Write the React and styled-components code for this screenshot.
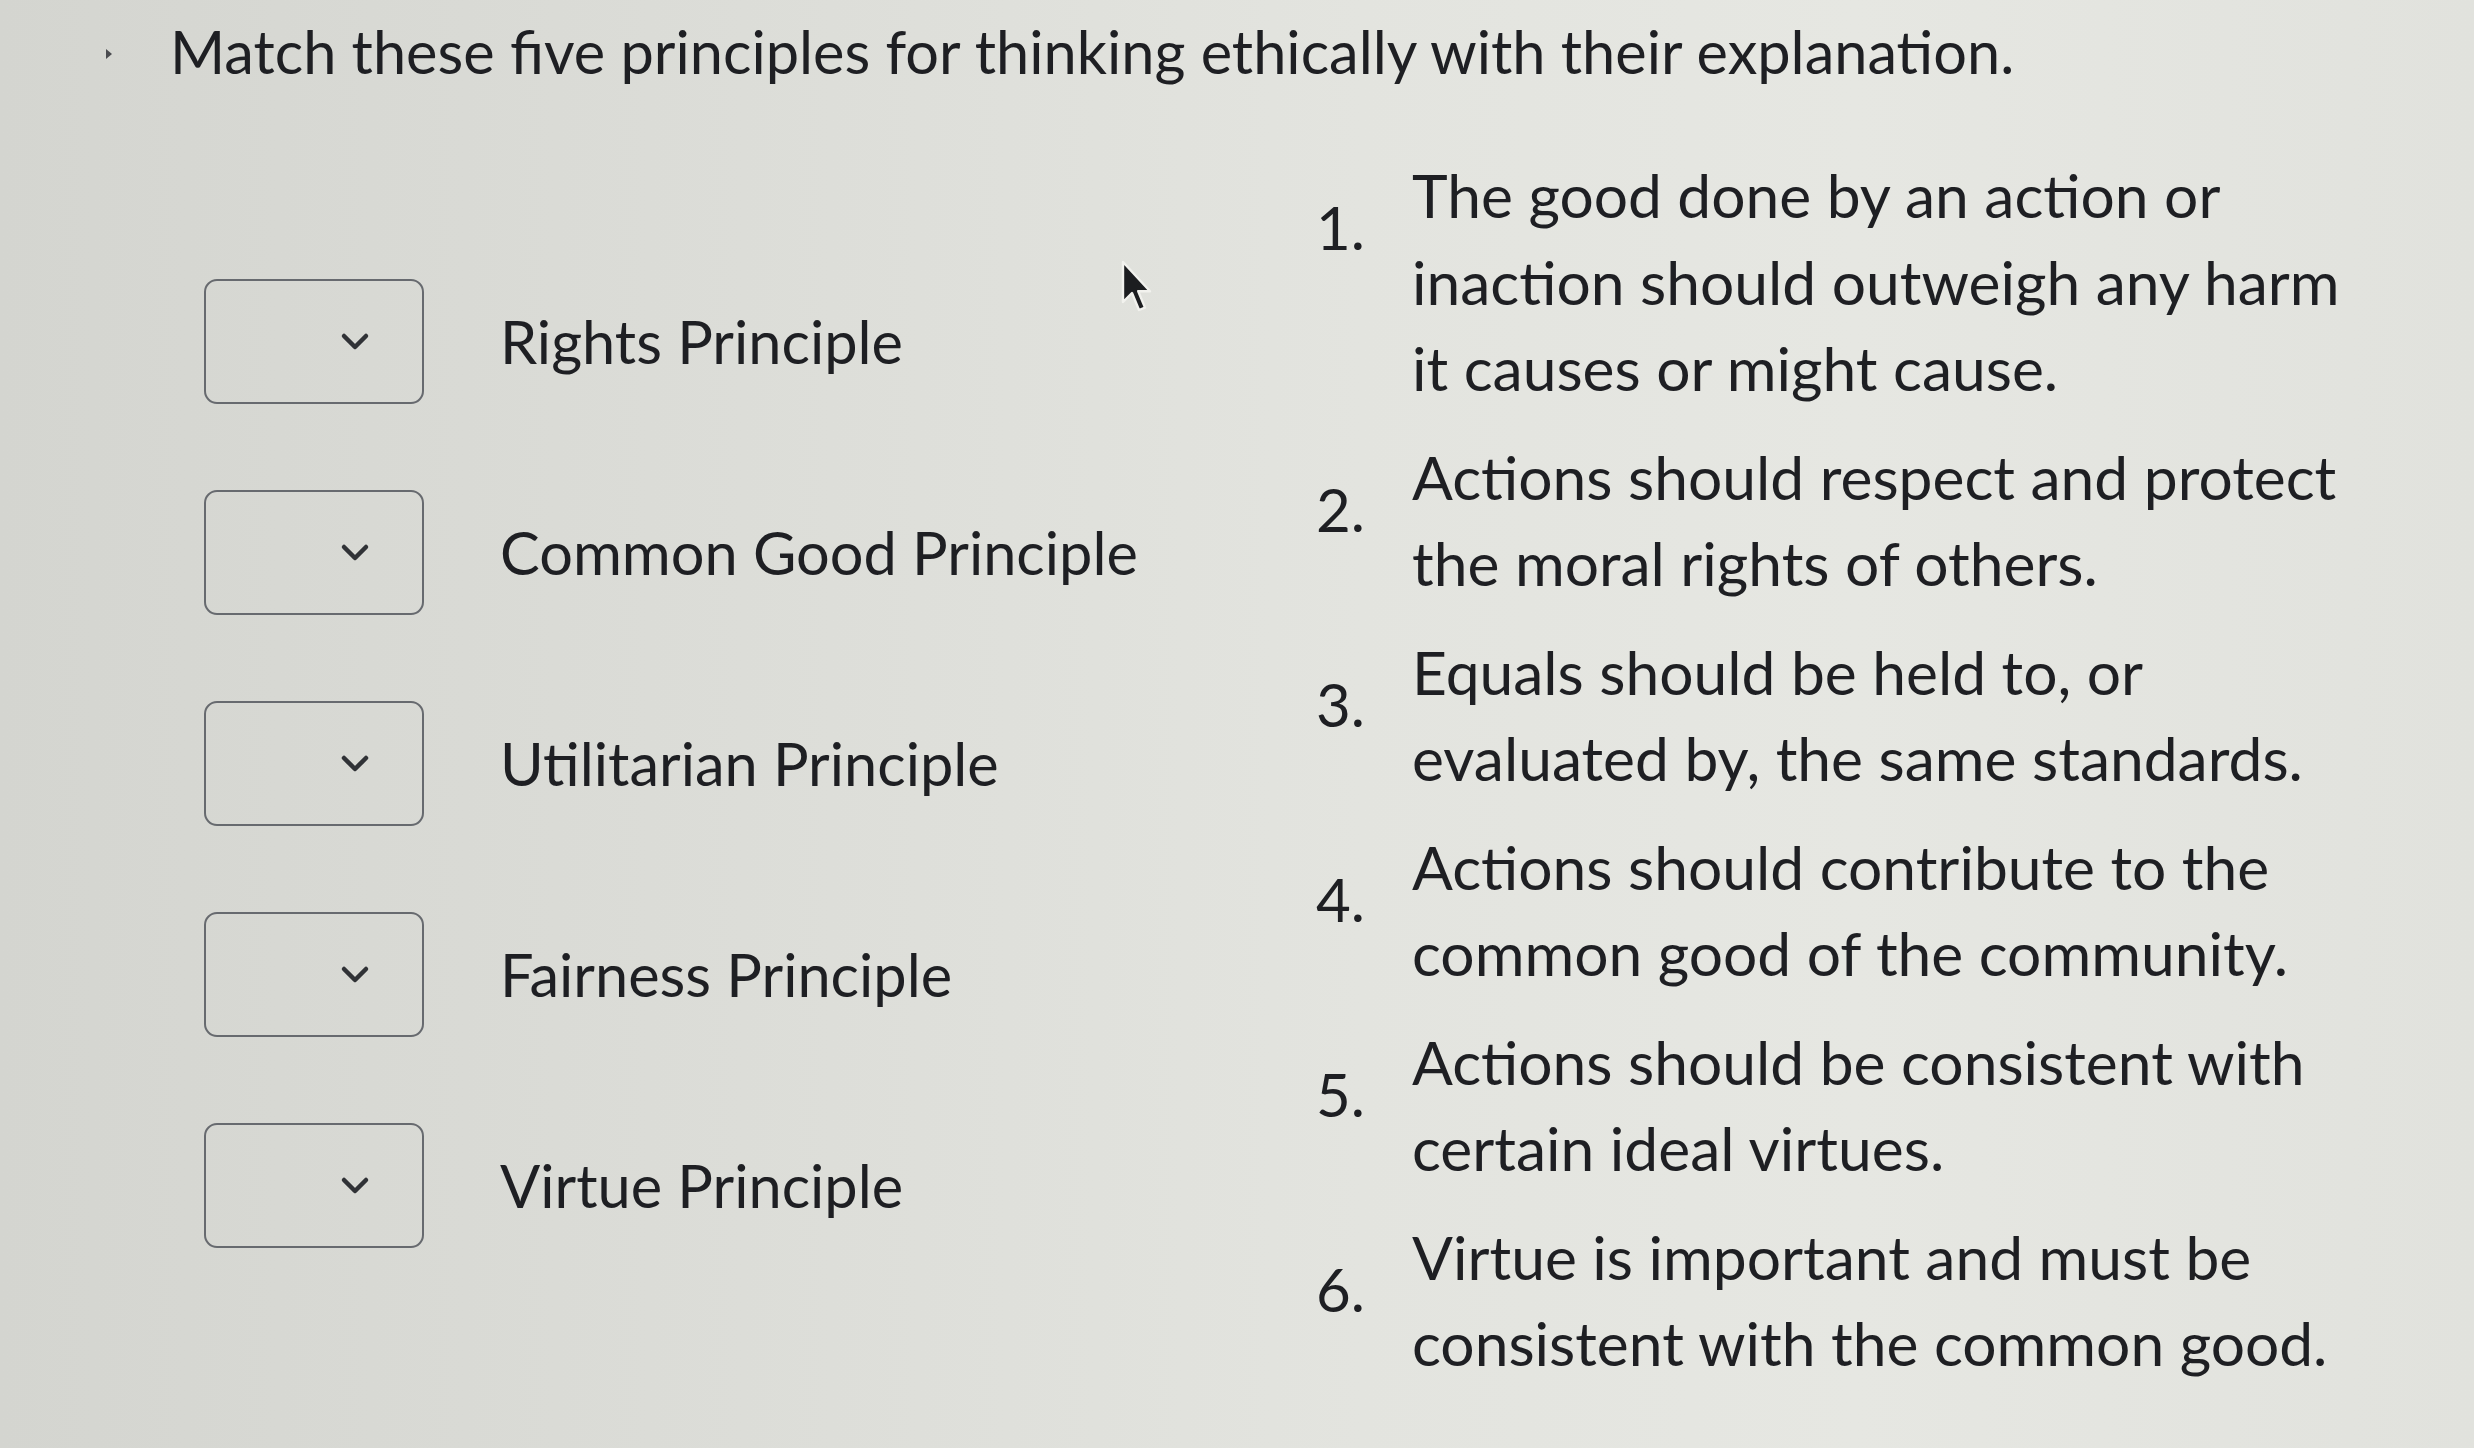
import React from 'react';
import styled, { createGlobalStyle } from 'styled-components';

const GlobalStyle = createGlobalStyle`
  html, body {
    margin: 0;
    padding: 0;
  }
  body {
    width: 2474px;
    height: 1448px;
    overflow: hidden;
    font-family: Lato, "Open Sans", "Liberation Sans", sans-serif;
    color: #1e1f23;
    background: linear-gradient(90deg, #d4d5d0 0%, #dcddd8 30%, #e3e4df 55%, #e6e7e2 75%, #e1e2dd 100%);
  }
`;

const Page = styled.div`
  position: relative;
  width: 2474px;
  height: 1448px;
  box-sizing: border-box;
  padding-top: 14px;
`;

const Heading = styled.div`
  display: flex;
  align-items: center;
  height: 74px;
  padding-left: 106px;
`;

const Bullet = styled.span`
  width: 0;
  height: 0;
  border-top: 5px solid transparent;
  border-bottom: 5px solid transparent;
  border-left: 6px solid #4a4b4f;
  margin-right: 58px;
  margin-top: 6px;
`;

const Title = styled.h1`
  margin: 0;
  font-size: 59.5px;
  font-weight: 400;
  line-height: 74px;
  white-space: nowrap;
`;

const Body = styled.div`
  display: flex;
  align-items: flex-start;
  margin-top: 64px;
  padding-left: 204px;
`;

const Choices = styled.div`
  width: 1112px;
  display: flex;
  flex-direction: column;
  padding-top: 84px;
`;

const ChoiceRow = styled.div`
  display: flex;
  align-items: center;
  height: 211px;
`;

const Select = styled.div`
  width: 220px;
  height: 125px;
  box-sizing: border-box;
  border: 2.5px solid #676a6f;
  border-radius: 13px;
  display: flex;
  align-items: center;
  justify-content: flex-end;
  padding-right: 52px;
  flex-shrink: 0;
`;

const Label = styled.span`
  margin-left: 76px;
  font-size: 59.5px;
  line-height: 1;
  white-space: nowrap;
`;

const Answers = styled.ol`
  list-style: none;
  margin: 0;
  padding: 0;
  display: flex;
  flex-direction: column;
  gap: 22px;
`;

const Answer = styled.li`
  display: flex;
  align-items: flex-start;
`;

const Number = styled.span`
  width: 96px;
  flex-shrink: 0;
  font-size: 60px;
  line-height: 87px;
  padding-top: 32px;
`;

const Text = styled.div`
  font-size: 60.5px;
  line-height: 86.5px;
  white-space: nowrap;
`;

const Cursor = styled.svg`
  position: absolute;
  left: 1121px;
  top: 260px;
`;

const Chevron = () => (
  <svg width="30" height="20" viewBox="0 0 30 20">
    <polyline points="4,4 15,15 26,4" fill="none" stroke="#303236" strokeWidth="4.5" strokeLinecap="round" strokeLinejoin="round" />
  </svg>
);

const principles = [
  'Rights Principle',
  'Common Good Principle',
  'Utilitarian Principle',
  'Fairness Principle',
  'Virtue Principle',
];

const explanations = [
  ['The good done by an action or', 'inaction should outweigh any harm', 'it causes or might cause.'],
  ['Actions should respect and protect', 'the moral rights of others.'],
  ['Equals should be held to, or', 'evaluated by, the same standards.'],
  ['Actions should contribute to the', 'common good of the community.'],
  ['Actions should be consistent with', 'certain ideal virtues.'],
  ['Virtue is important and must be', 'consistent with the common good.'],
];

export default function App() {
  return (
    <>
      <GlobalStyle />
      <Page>
        <Heading>
          <Bullet />
          <Title>Match these five principles for thinking ethically with their explanation.</Title>
        </Heading>
        <Body>
          <Choices>
            {principles.map(p => (
              <ChoiceRow key={p}>
                <Select>
                  <Chevron />
                </Select>
                <Label>{p}</Label>
              </ChoiceRow>
            ))}
          </Choices>
          <Answers>
            {explanations.map((lines, i) => (
              <Answer key={i}>
                <Number>{i + 1}.</Number>
                <Text>
                  {lines.map((l, j) => (
                    <div key={j}>{l}</div>
                  ))}
                </Text>
              </Answer>
            ))}
          </Answers>
        </Body>
        <Cursor width="32" height="54" viewBox="0 0 16 27">
          <path d="M1 1 L1 21 L5.5 16.5 L9 25 L12 23.8 L8.6 15.6 L14.5 15.6 Z" fill="#1c1d20" stroke="#f2f2ee" strokeWidth="1.2" strokeLinejoin="round" />
        </Cursor>
      </Page>
    </>
  );
}
